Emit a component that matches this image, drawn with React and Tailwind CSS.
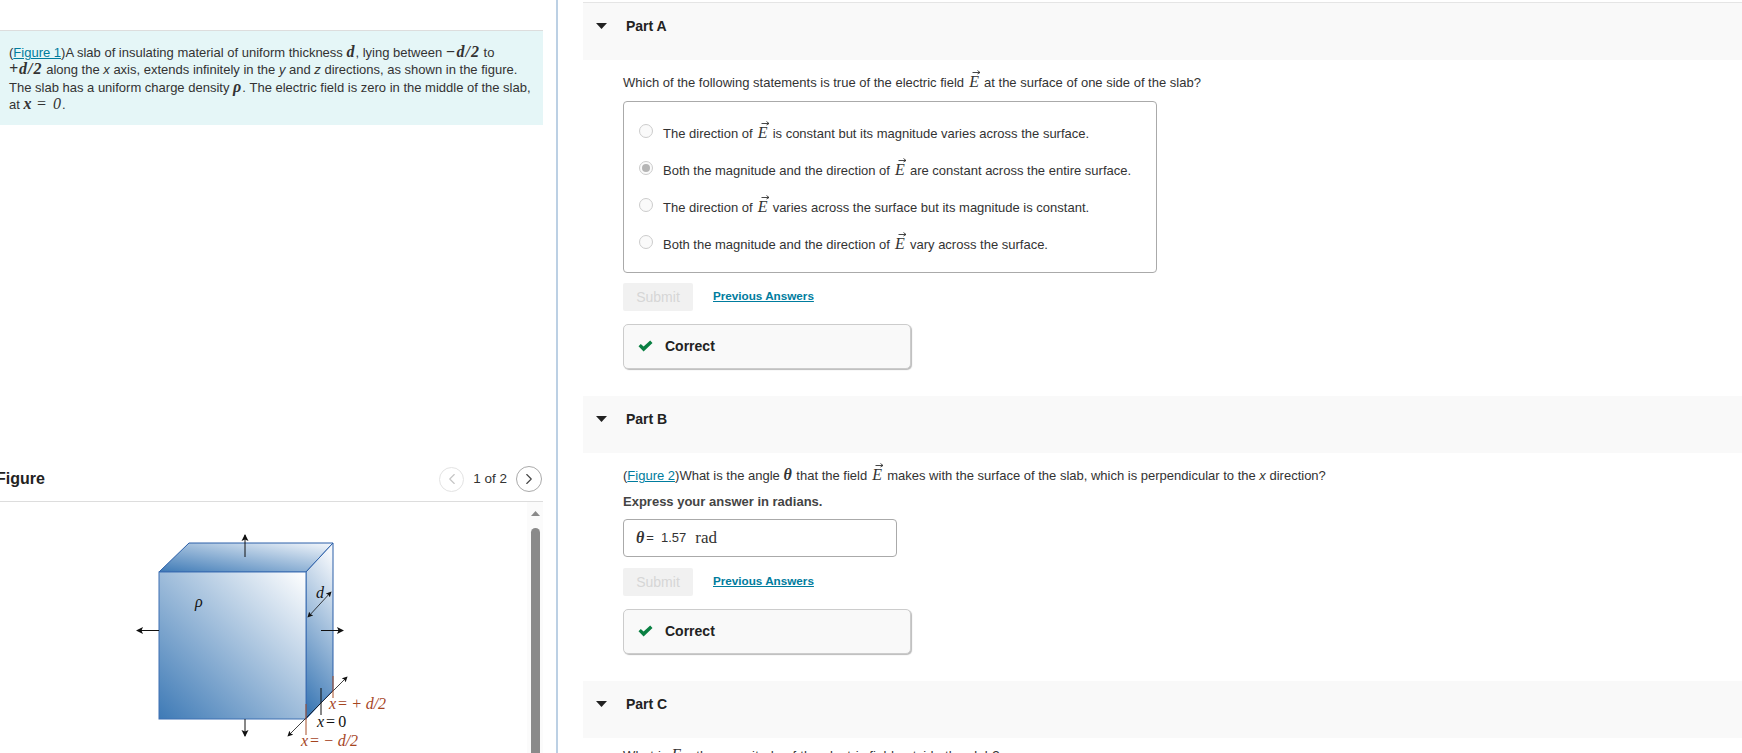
import { ChevronLeft, ChevronRight } from "lucide-react";

const SANS = "font-['Liberation_Sans',Arial,sans-serif]";
const SERIF = "font-['Liberation_Serif','Times_New_Roman',serif]";

// math bits, the page renders these in a serif math font
const M = ({ children, bold }) => (
  <span className={`${SERIF} italic text-[16px] leading-none tracking-[1px] ${bold ? "font-bold" : ""}`}>{children}</span>
);

const VecE = () => (
  <span className={`${SERIF} relative mx-[1.5px] inline-block italic text-[16px] leading-none text-[#333]`}>
    E
    <svg className="absolute left-[3px] top-[-5px]" width="9" height="6" viewBox="0 0 9 6">
      <path d="M0.5 3.5H8M5.5 1.5L8 3.5L5.5 5" fill="none" stroke="#333" strokeWidth="0.9" />
    </svg>
  </span>
);

const PartHeader = ({ title }) => (
  <div className="flex h-[57px] bg-[#f9f9f9] pl-[13px] pt-[17px]">
    <svg className="mt-[3px]" width="11" height="6" viewBox="0 0 11 6">
      <path d="M0 0H11L5.5 6Z" fill="#222" />
    </svg>
    <span className="ml-[19px] mt-[-2px] text-[14px] leading-[17px] font-bold text-[#222]">{title}</span>
  </div>
);

const Radio = ({ checked }) => (
  <span className="flex h-[14px] w-[14px] shrink-0 items-center justify-center rounded-full border border-[#ccc] bg-[#fafafa]">
    {checked && <span className="h-[8px] w-[8px] rounded-full bg-[#b5b5b5]" />}
  </span>
);

const Choice = ({ checked, before, after }) => (
  <div className="flex h-[37px] items-start pl-[15px]">
    <Radio checked={checked} />
    <span className="ml-[10px] mt-[1px] text-[13px] leading-[18px] whitespace-nowrap text-[#333]">
      {before} <VecE /> {after}
    </span>
  </div>
);

const SubmitRow = () => (
  <div className="flex items-start">
    <div className="flex h-[28px] w-[70px] items-center justify-center rounded-[2px] bg-[#f1f1f1] text-[14px] text-[#d6d6d6]">
      Submit
    </div>
    <a className="ml-[20px] mt-[5px] text-[11.7px] leading-[15px] font-bold text-[#007c9e] underline">Previous Answers</a>
  </div>
);

const Correct = () => (
  <div className="mt-[13px] flex h-[45px] w-[288px] items-center rounded-[5px] border border-[#ccc] bg-[#f9f9f9] pl-[14px] shadow-[1px_1px_1px_#bbb]">
    <svg className="mt-[-1px]" width="15" height="12" viewBox="0 0 15 12">
      <path d="M0.5 6.3L2.8 3.9L5.6 6.6L12.2 0.5L14.5 2.9L5.6 11.5Z" fill="#0a8043" />
    </svg>
    <span className="ml-[12px] text-[14px] font-bold text-[#222]">Correct</span>
  </div>
);

function SlabFigure() {
  return (
    <svg className="ml-[100px] shrink-0" width="320" height="251" viewBox="0 2 320 251">
      <defs>
        <linearGradient id="front" x1="0" y1="1" x2="1" y2="0">
          <stop offset="0" stopColor="#3e7ab6" />
          <stop offset="1" stopColor="#ffffff" />
        </linearGradient>
        <linearGradient id="top" x1="0" y1="1" x2="1" y2="0">
          <stop offset="0" stopColor="#3e7ab6" />
          <stop offset="1" stopColor="#f5f8fc" />
        </linearGradient>
        <linearGradient id="right" x1="0.6" y1="0" x2="0.4" y2="1">
          <stop offset="0" stopColor="#f4f7fb" />
          <stop offset="1" stopColor="#3e7ab6" />
        </linearGradient>
        <marker id="tip" markerWidth="8" markerHeight="8" refX="6" refY="4" orient="auto-start-reverse">
          <path d="M0 0.5L7 4L0 7.5L1.5 4Z" fill="#111" />
        </marker>
      </defs>
      <polygon points="59,72 89,43 233,43 206,72" fill="url(#top)" stroke="#2a5ea8" strokeWidth="1" />
      <polygon points="206,72 233,43 233,190 206,219" fill="url(#right)" stroke="#2a5ea8" strokeWidth="1" />
      <rect x="59" y="72" width="147" height="147" fill="url(#front)" stroke="#3f70b3" strokeWidth="1" />
      <g stroke="#111" strokeWidth="1" fill="none" markerEnd="url(#tip)">
        <line x1="145" y1="57" x2="145" y2="35" />
        <line x1="145" y1="219" x2="145" y2="236" />
        <line x1="59" y1="130.5" x2="37" y2="130.5" />
        <line x1="221" y1="130.5" x2="243" y2="130.5" />
        <line x1="208" y1="117" x2="231" y2="92" markerStart="url(#tip)" strokeWidth="0.8" />
        <line x1="188" y1="236" x2="247" y2="177" markerStart="url(#tip)" strokeWidth="0.8" />
      </g>
      <line x1="233" y1="176" x2="233" y2="198" stroke="#a8502a" />
      <line x1="221" y1="188" x2="221" y2="215" stroke="#111" />
      <line x1="206" y1="204" x2="206" y2="235" stroke="#a8502a" />
      <g className={SERIF} fontStyle="italic" fontSize="16">
        <text x="95" y="107" fill="#111">ρ</text>
        <text x="216" y="98" fill="#111">d</text>
        <text x="229" y="209" fill="#a5451f">x<tspan fontStyle="normal" dx="2">=</tspan><tspan fontStyle="normal" dx="5">+</tspan><tspan dx="4.5">d/2</tspan></text>
        <text x="217" y="227" fill="#111">x<tspan fontStyle="normal" dx="2">=</tspan><tspan fontStyle="normal" dx="3">0</tspan></text>
        <text x="201" y="246" fill="#a5451f">x<tspan fontStyle="normal" dx="2">=</tspan><tspan fontStyle="normal" dx="5">−</tspan><tspan dx="4.5">d/2</tspan></text>
      </g>
    </svg>
  );
}

function LeftPanel() {
  return (
    <div className="flex h-[753px] w-[556px] shrink-0 flex-col overflow-hidden pt-[30px]">
      <div className="h-[95px] w-[543px] border-t border-[#ddd] bg-[#e5f6f7] pl-[9px] pt-[13px] text-[13px] leading-[17.4px] text-[#333]">
        (<a className="text-[#007c9e] underline">Figure 1</a>)A slab of insulating material of uniform thickness <M bold>d</M>, lying between <M bold>−d/2</M> to
        <br />
        <M bold>+d/2</M> along the <i>x</i> axis, extends infinitely in the <i>y</i> and <i>z</i> directions, as shown in the figure.
        <br />
        The slab has a uniform charge density <M bold>ρ</M>. The electric field is zero in the middle of the slab,
        <br />
        at <M bold>x</M> <M>= 0</M>.
      </div>
      <div className="mt-[334px] flex h-[43px] w-[543px] shrink-0 items-center border-b border-[#ddd] pb-[2px]">
        <span className="ml-[-4px] text-[16px] font-bold text-[#222]">Figure</span>
        <div className="ml-auto flex items-center pr-[1px]">
          <span className="flex h-[25px] w-[25px] items-center justify-center rounded-full border border-[#e3e3e3] text-[#c4c4c4]">
            <ChevronLeft size={18} strokeWidth={1.5} />
          </span>
          <span className="mx-[9px] text-[13.5px] text-[#333]">1 of 2</span>
          <span className="flex h-[26px] w-[26px] items-center justify-center rounded-full border border-[#aaa] text-[#444]">
            <ChevronRight size={18} strokeWidth={1.5} />
          </span>
        </div>
      </div>
      <div className="flex min-h-0 w-[543px] flex-1">
        <SlabFigure />
        <div className="ml-auto flex w-[16px] shrink-0 flex-col items-center bg-[#fbfbfb] pt-[9px]">
          <svg width="9" height="5" viewBox="0 0 9 5">
            <path d="M4.5 0L9 5H0Z" fill="#8a8a8a" />
          </svg>
          <div className="mt-[12px] w-[9px] flex-1 rounded-t-[5px] bg-[#8a8a8a]" />
        </div>
      </div>
    </div>
  );
}

function RightPanel() {
  return (
    <div className="h-[753px] min-w-0 flex-1 overflow-hidden pl-[25px] pt-[2px] text-[#333]">
      <div className="border-t border-[#e5e5e5]">
        <PartHeader title="Part A" />
      </div>
      <div className="pl-[40px]">
        <p className="mt-[13px] h-[19px] text-[13px] leading-[19px] whitespace-nowrap">
          Which of the following statements is true of the electric field <VecE /> at the surface of one side of the slab?
        </p>
        <div className="mt-[9px] h-[172px] w-[534px] rounded-[4px] border border-[#aaa] pt-[22px]">
          <Choice before="The direction of" after="is constant but its magnitude varies across the surface." />
          <Choice checked before="Both the magnitude and the direction of" after="are constant across the entire surface." />
          <Choice before="The direction of" after="varies across the surface but its magnitude is constant." />
          <Choice before="Both the magnitude and the direction of" after="vary across the surface." />
        </div>
        <div className="mt-[10px]">
          <SubmitRow />
        </div>
        <Correct />
      </div>

      <div className="mt-[27px]">
        <PartHeader title="Part B" />
      </div>
      <div className="pl-[40px]">
        <p className="mt-[13px] h-[19px] text-[13px] leading-[19px] whitespace-nowrap">
          (<a className="text-[#007c9e] underline">Figure 2</a>)What is the angle <M bold>θ</M> that the field <VecE /> makes with the surface of the slab, which is perpendicular to the <i>x</i> direction?
        </p>
        <p className="mt-[8px] h-[18px] text-[13px] leading-[18px] font-bold text-[#444]">Express your answer in radians.</p>
        <div className="mt-[8px] flex h-[38px] w-[274px] items-center rounded-[4px] border border-[#aaa] pl-[12px] text-[13px]">
          <M bold>θ</M>
          <span className="ml-[1px]">=</span>
          <span className="ml-[7px]">1.57</span>
          <span className={`${SERIF} ml-[9px] text-[17px]`}>rad</span>
        </div>
        <div className="mt-[11px]">
          <SubmitRow />
        </div>
        <Correct />
      </div>

      <div className="mt-[27px]">
        <PartHeader title="Part C" />
      </div>
      <div className="pl-[40px]">
        <p className="mt-[8px] text-[13px] leading-[19px] tracking-[0.2px] whitespace-nowrap">
          What is <M>E<sub>x</sub></M>, the magnitude of the electric field outside the slab?
        </p>
      </div>
    </div>
  );
}

export default function App() {
  return (
    <div className={`${SANS} flex h-[753px] w-[1742px] overflow-hidden bg-white`}>
      <LeftPanel />
      <div className="h-[753px] w-[2px] shrink-0 bg-[#bcd0e4]" />
      <RightPanel />
    </div>
  );
}
